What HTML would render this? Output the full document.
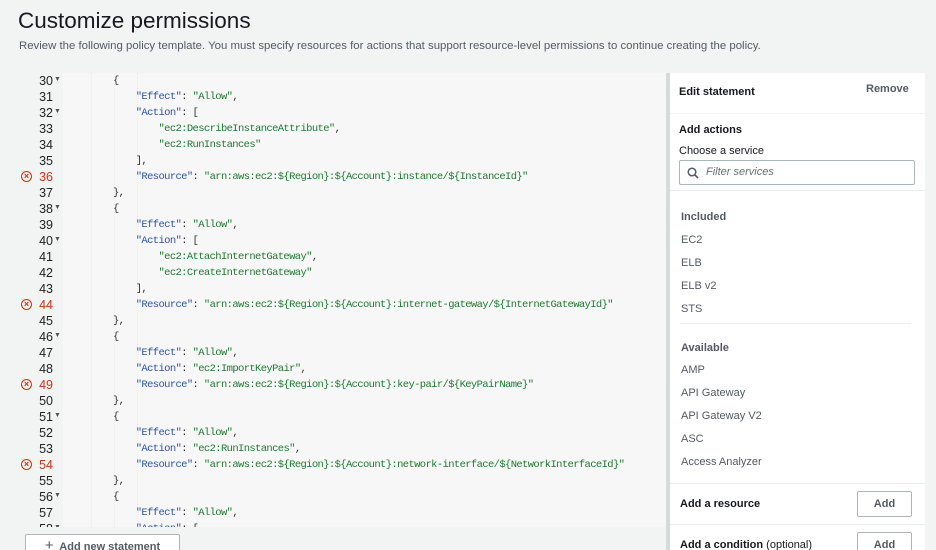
<!DOCTYPE html>
<html><head><style>
*{margin:0;padding:0;box-sizing:border-box}
html,body{width:936px;height:550px;overflow:hidden}
body{background:#f2f3f3;font-family:"Liberation Sans",sans-serif;color:#16191f;position:relative}
h1{position:absolute;left:18px;top:8px;font-size:22.5px;font-weight:400;color:#16191f}
.sub{position:absolute;left:19px;top:40px;font-size:11.4px;color:#545b64}
.ed{position:absolute;left:18px;top:73px;width:648px;height:454px;background:#f7f7f7;overflow:hidden}
.gut{position:absolute;left:0;top:0;width:45px;height:100%;background:#f2f3f3}
.ln{position:absolute;left:0;text-align:right;font-family:"Liberation Sans",sans-serif;font-size:12.5px;color:#222;height:16px;line-height:16px}
.ln.e{color:#d13212}
.tri{position:absolute;font-size:7px;color:#555}
.err{position:absolute;left:3px;width:11px;height:11px;border:1.5px solid #d13212;border-radius:50%;color:#d13212;font-size:9px;line-height:8px;text-align:center;font-weight:bold}
.cl{position:absolute;white-space:pre;font-family:"Liberation Mono",monospace;font-size:10.5px;letter-spacing:-0.62px;height:16px;line-height:16px;color:#333}
.k{color:#2a55a0}.s{color:#1e7a2e}
.guide{position:absolute;top:0;width:0;height:100%;border-left:1px dotted #ebebeb}
.panel{position:absolute;left:666px;top:73px;width:259px;height:477px;background:#fff;border-left:4px solid #d5dbdb}
.p{position:absolute;font-size:11px}
.b{font-weight:bold}
.g{color:#545b64}
.sep{position:absolute;left:0;right:0;border-top:1px solid #eaeded}
.btn{position:absolute;border:1px solid #aab7b8;background:#fff;font-weight:bold;font-size:11px;color:#545b64;text-align:center;border-radius:2px}
</style></head><body>
<h1>Customize permissions</h1>
<div class="sub">Review the following policy template. You must specify resources for actions that support resource-level permissions to continue creating the policy.</div>
<div class="ed">
<div class="gut"></div>
<div class="guide" style="left:73px"></div>
<div class="guide" style="left:96px"></div>
<div class="guide" style="left:119px"></div>
<div id="lines"></div>
</div>
<div class="panel">
<div class="p b" style="left:9px;top:13px">Edit statement</div>
<div class="p b g" style="left:196px;top:10px">Remove</div>
<div class="sep" style="top:40px;border-color:#f2f3f3"></div>
<div class="p b" style="left:9px;top:51px">Add actions</div>
<div class="p" style="left:9px;top:72px">Choose a service</div>
<div style="position:absolute;left:9px;top:87px;width:236px;height:25px;border:1px solid #aab7b8;border-radius:2px">
<svg style="position:absolute;left:7px;top:6px" width="12" height="12" viewBox="0 0 12 12"><circle cx="5" cy="5" r="3.8" fill="none" stroke="#545b64" stroke-width="1.5"/><path d="M7.8 7.8L11 11" stroke="#545b64" stroke-width="1.6"/></svg>
<span style="position:absolute;left:26px;top:5px;font-size:11px;font-style:italic;color:#687078">Filter services</span></div>
<div class="sep" style="top:117px"></div>
<div class="p b g" style="left:11px;top:138px">Included</div>
<div class="p g" style="left:11px;top:161px">EC2</div>
<div class="p g" style="left:11px;top:184px">ELB</div>
<div class="p g" style="left:11px;top:207px">ELB v2</div>
<div class="p g" style="left:11px;top:230px">STS</div>
<div class="sep" style="top:250px;left:10px;right:14px"></div>
<div class="p b g" style="left:11px;top:269px">Available</div>
<div class="p g" style="left:11px;top:291px">AMP</div>
<div class="p g" style="left:11px;top:314px">API Gateway</div>
<div class="p g" style="left:11px;top:337px">API Gateway V2</div>
<div class="p g" style="left:11px;top:360px">ASC</div>
<div class="p g" style="left:11px;top:383px">Access Analyzer</div>
<div class="sep" style="top:410px"></div>
<div class="p b" style="left:10px;top:425px">Add a resource</div>
<div class="btn" style="left:187px;top:418px;width:55px;height:26px;line-height:24px">Add</div>
<div class="sep" style="top:451px"></div>
<div class="p b" style="left:10px;top:466px">Add a condition <span style="font-weight:normal">(optional)</span></div>
<div class="btn" style="left:187px;top:459px;width:55px;height:26px;line-height:24px">Add</div>
</div>
<div class="btn" style="left:25px;top:534px;width:155px;height:24px;line-height:22px;color:#545b64"><span style="font-size:15px;font-weight:normal">+</span>&nbsp; Add new statement</div>
<script>
var L=[
[30,1,0,'{'],
[31,0,0,'    <span class=k>"Effect"</span>: <span class=s>"Allow"</span>,'],
[32,1,0,'    <span class=k>"Action"</span>: ['],
[33,0,0,'        <span class=s>"ec2:DescribeInstanceAttribute"</span>,'],
[34,0,0,'        <span class=s>"ec2:RunInstances"</span>'],
[35,0,0,'    ],'],
[36,0,1,'    <span class=k>"Resource"</span>: <span class=s>"arn:aws:ec2:${Region}:${Account}:instance/${InstanceId}"</span>'],
[37,0,0,'},'],
[38,1,0,'{'],
[39,0,0,'    <span class=k>"Effect"</span>: <span class=s>"Allow"</span>,'],
[40,1,0,'    <span class=k>"Action"</span>: ['],
[41,0,0,'        <span class=s>"ec2:AttachInternetGateway"</span>,'],
[42,0,0,'        <span class=s>"ec2:CreateInternetGateway"</span>'],
[43,0,0,'    ],'],
[44,0,1,'    <span class=k>"Resource"</span>: <span class=s>"arn:aws:ec2:${Region}:${Account}:internet-gateway/${InternetGatewayId}"</span>'],
[45,0,0,'},'],
[46,1,0,'{'],
[47,0,0,'    <span class=k>"Effect"</span>: <span class=s>"Allow"</span>,'],
[48,0,0,'    <span class=k>"Action"</span>: <span class=s>"ec2:ImportKeyPair"</span>,'],
[49,0,1,'    <span class=k>"Resource"</span>: <span class=s>"arn:aws:ec2:${Region}:${Account}:key-pair/${KeyPairName}"</span>'],
[50,0,0,'},'],
[51,1,0,'{'],
[52,0,0,'    <span class=k>"Effect"</span>: <span class=s>"Allow"</span>,'],
[53,0,0,'    <span class=k>"Action"</span>: <span class=s>"ec2:RunInstances"</span>,'],
[54,0,1,'    <span class=k>"Resource"</span>: <span class=s>"arn:aws:ec2:${Region}:${Account}:network-interface/${NetworkInterfaceId}"</span>'],
[55,0,0,'},'],
[56,1,0,'{'],
[57,0,0,'    <span class=k>"Effect"</span>: <span class=s>"Allow"</span>,'],
[58,1,0,'    <span class=k>"Action"</span>: [']];
var h='';
L.forEach(function(r,i){var y=i*16;
h+='<div class="ln'+(r[2]?' e':'')+'" style="top:'+y+'px;width:35px">'+r[0]+'</div>';
if(r[1])h+='<div class="tri" style="left:36px;top:'+(y+3)+'px">&#9660;</div>';
if(r[2])h+='<div class="err" style="top:'+(y+2)+'px">&times;</div>';
h+='<div class="cl" style="left:95px;top:'+y+'px">'+r[3]+'</div>';});
document.getElementById('lines').innerHTML=h;
</script>
</body></html>
